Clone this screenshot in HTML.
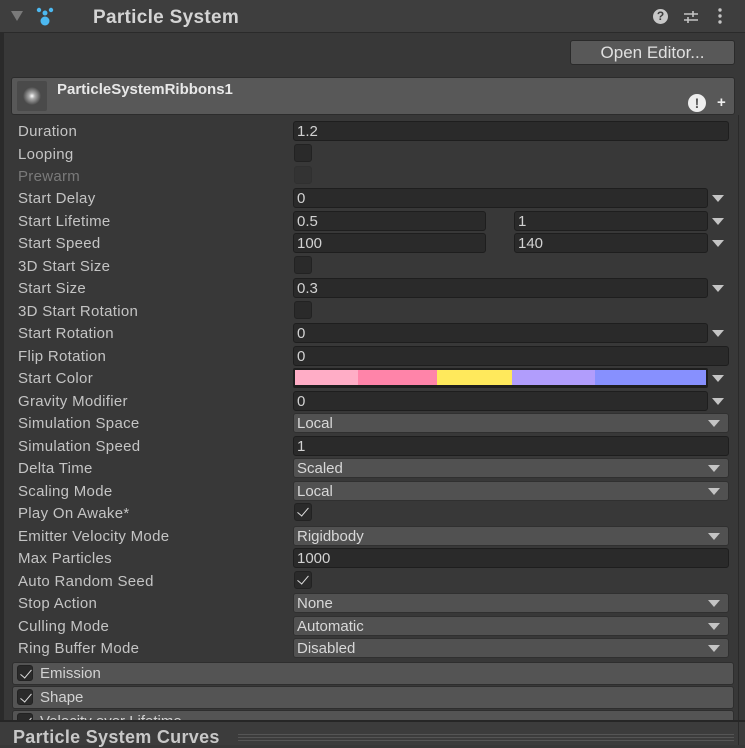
<!DOCTYPE html>
<html><head><style>
*{box-sizing:border-box;margin:0;padding:0}
body{width:745px;height:745px;background:#383838;font-family:"Liberation Sans",sans-serif;font-size:15px;color:#c4c4c4;position:relative;overflow:hidden}
.a{position:absolute}
.lbl{position:absolute;left:18px;height:20px;line-height:22px;letter-spacing:.3px}
.t{position:absolute;height:20px;background:#2a2a2a;border:1px solid #1e1e1e;border-radius:3px;line-height:20px;padding-left:3px;color:#d2d2d2}
.d{position:absolute;left:293px;width:436px;height:20px;background:#515151;border:1px solid #303030;border-radius:3px;line-height:20px;padding-left:3px;color:#d8d8d8}
.d:after{content:"";position:absolute;right:8px;top:6px;border-left:6px solid transparent;border-right:6px solid transparent;border-top:7px solid #c4c4c4}
.ar{position:absolute;left:712px;width:0;height:0;border-left:6px solid transparent;border-right:6px solid transparent;border-top:7px solid #c4c4c4}
.c{position:absolute;left:294px;width:18px;height:18px;background:#2a2a2a;border:1px solid #222;border-radius:3px}
.ck:after{content:"";position:absolute;left:5px;top:1px;width:5px;height:10px;border-right:1.5px solid #ddd;border-bottom:1.5px solid #ddd;transform:rotate(40deg)}
.mh{position:absolute;left:12px;width:722px;height:23px;background:#545454;border:1px solid #2e2e2e;border-radius:3px;line-height:21px;padding-left:27px;color:#d2d2d2}
.mh .c{left:4px;top:2px;width:16px;height:16px}
</style></head><body>
<div class="a" style="left:0;top:0;width:4px;height:745px;background:#2a2a2a"></div>
<div class="a" style="left:0;top:0;width:745px;height:33px;background:#3e3e3e;border-bottom:1px solid #2a2a2a"></div>
<div class="a" style="left:11px;top:11px;border-left:6px solid transparent;border-right:6px solid transparent;border-top:10px solid #7a7a7a"></div>
<svg class="a" style="left:35px;top:6px" width="20" height="20"><circle cx="4" cy="4" r="2.2" fill="#4cb8f0"/><circle cx="16" cy="4" r="2.2" fill="#4cb8f0"/><circle cx="10" cy="7" r="2.5" fill="#4cb8f0"/><ellipse cx="10" cy="15" rx="4.5" ry="4.5" fill="#4cb8f0"/></svg>
<div class="a" style="left:93px;top:7px;font-size:19px;color:#d4d4d4;font-weight:bold;letter-spacing:.3px">Particle System</div>
<div class="a" style="left:653px;top:9px;width:15px;height:15px;border-radius:50%;background:#c8c8c8;color:#3e3e3e;font-size:12px;font-weight:bold;text-align:center;line-height:15px">?</div>
<svg class="a" style="left:682px;top:8px" width="18" height="18" stroke="#c4c4c4" stroke-width="1.6"><path d="M2 6H16M2 12H16M11 3V9M6 9V15"/></svg>
<svg class="a" style="left:717px;top:7px" width="6" height="18" fill="#c4c4c4"><circle cx="3" cy="3" r="1.7"/><circle cx="3" cy="9" r="1.7"/><circle cx="3" cy="15" r="1.7"/></svg>
<div class="a" style="left:570px;top:40px;width:165px;height:25px;background:#585858;border:1px solid #2a2a2a;border-radius:3px;text-align:center;line-height:24px;font-size:17px;color:#e0e0e0">Open Editor...</div>
<div class="a" style="left:11px;top:77px;width:724px;height:38px;background:#585858;border:1px solid #2c2c2c;border-radius:3px"></div>
<div class="a" style="left:17px;top:81px;width:30px;height:30px;background:radial-gradient(circle,#fff 0,#aaa 3px,#4a4a4a 9px,#4a4a4a 100%);border-radius:2px"></div>
<div class="a" style="left:57px;top:81px;font-size:15px;font-weight:bold;color:#e8e8e8">ParticleSystemRibbons1</div>
<div class="a" style="left:688px;top:94px;width:18px;height:18px;border-radius:50%;background:#eee;color:#585858;font-weight:bold;text-align:center;line-height:18px;font-size:14px">!</div>
<div class="a" style="left:717px;top:94px;color:#eee;font-weight:bold;font-size:15px">+</div>
<div class="a" style="left:738px;top:115px;width:1px;height:607px;background:#2a2a2a"></div>

<div class="lbl" style="top:121px">Duration</div><div class="t" style="left:293px;top:121px;width:436px">1.2</div>
<div class="lbl" style="top:144px">Looping</div><div class="c" style="top:144px"></div>
<div class="lbl" style="top:166px;color:#7a7a7a">Prewarm</div><div class="c" style="top:166px;background:#333;border-color:#303030"></div>
<div class="lbl" style="top:188px">Start Delay</div><div class="t" style="left:293px;top:188px;width:415px">0</div><div class="ar" style="top:195px"></div>
<div class="lbl" style="top:211px">Start Lifetime</div><div class="t" style="left:293px;top:211px;width:193px">0.5</div><div class="t" style="left:514px;top:211px;width:194px">1</div><div class="ar" style="top:218px"></div>
<div class="lbl" style="top:233px">Start Speed</div><div class="t" style="left:293px;top:233px;width:193px">100</div><div class="t" style="left:514px;top:233px;width:194px">140</div><div class="ar" style="top:240px"></div>
<div class="lbl" style="top:256px">3D Start Size</div><div class="c" style="top:256px"></div>
<div class="lbl" style="top:278px">Start Size</div><div class="t" style="left:293px;top:278px;width:415px">0.3</div><div class="ar" style="top:285px"></div>
<div class="lbl" style="top:301px">3D Start Rotation</div><div class="c" style="top:301px"></div>
<div class="lbl" style="top:323px">Start Rotation</div><div class="t" style="left:293px;top:323px;width:415px">0</div><div class="ar" style="top:330px"></div>
<div class="lbl" style="top:346px">Flip Rotation</div><div class="t" style="left:293px;top:346px;width:436px">0</div>
<div class="lbl" style="top:368px">Start Color</div>
<div class="a" style="left:293px;top:368px;width:415px;height:20px;background:#1e1e1e;border-radius:2px"></div>
<div class="a" style="left:295px;top:370px;width:63px;height:15px;background:#ffadc6"></div>
<div class="a" style="left:358px;top:370px;width:79px;height:15px;background:#ff84a9"></div>
<div class="a" style="left:437px;top:370px;width:75px;height:15px;background:#ffe95c"></div>
<div class="a" style="left:512px;top:370px;width:83px;height:15px;background:#b19dfc"></div>
<div class="a" style="left:595px;top:370px;width:111px;height:15px;background:#8790fe"></div>
<div class="ar" style="top:375px"></div>
<div class="lbl" style="top:391px">Gravity Modifier</div><div class="t" style="left:293px;top:391px;width:415px">0</div><div class="ar" style="top:398px"></div>
<div class="lbl" style="top:413px">Simulation Space</div><div class="d" style="top:413px">Local</div>
<div class="lbl" style="top:436px">Simulation Speed</div><div class="t" style="left:293px;top:436px;width:436px">1</div>
<div class="lbl" style="top:458px">Delta Time</div><div class="d" style="top:458px">Scaled</div>
<div class="lbl" style="top:481px">Scaling Mode</div><div class="d" style="top:481px">Local</div>
<div class="lbl" style="top:503px">Play On Awake*</div><div class="c ck" style="top:503px"></div>
<div class="lbl" style="top:526px">Emitter Velocity Mode</div><div class="d" style="top:526px">Rigidbody</div>
<div class="lbl" style="top:548px">Max Particles</div><div class="t" style="left:293px;top:548px;width:436px">1000</div>
<div class="lbl" style="top:571px">Auto Random Seed</div><div class="c ck" style="top:571px"></div>
<div class="lbl" style="top:593px">Stop Action</div><div class="d" style="top:593px">None</div>
<div class="lbl" style="top:616px">Culling Mode</div><div class="d" style="top:616px">Automatic</div>
<div class="lbl" style="top:638px">Ring Buffer Mode</div><div class="d" style="top:638px">Disabled</div>

<div class="mh" style="top:662px"><div class="c ck"></div>Emission</div>
<div class="mh" style="top:686px"><div class="c ck"></div>Shape</div>
<div class="mh" style="top:710px"><div class="c ck"></div>Velocity over Lifetime</div>
<div class="a" style="left:0;top:720px;width:745px;height:25px;background:#3c3c3c;border-top:2px solid #262626"></div>
<div class="a" style="left:13px;top:727px;font-size:18px;font-weight:bold;color:#c8c8c8;letter-spacing:.3px">Particle System Curves</div>
<div class="a" style="left:238px;top:734px;width:496px;height:7px;border-top:1px solid #555;border-bottom:1px solid #555"></div>
<div class="a" style="left:238px;top:737px;width:496px;height:1px;background:#555"></div>
<div class="a" style="left:738px;top:722px;width:1px;height:23px;background:#2a2a2a"></div>
</body></html>
